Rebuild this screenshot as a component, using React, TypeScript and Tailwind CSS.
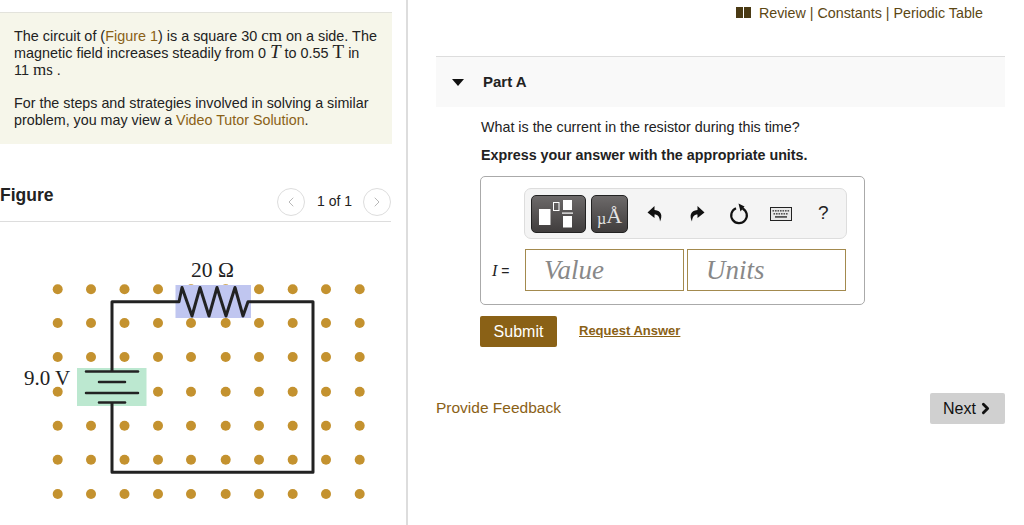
import React from 'react';
import { ChevronLeft, ChevronRight } from 'lucide-react';

const dotXs = [57.7, 91, 124.5, 158, 191, 225.7, 259, 292.7, 326, 359.7];
const dotYs = [49.3, 83, 117, 151.7, 185.7, 219.7, 254];

const Circuit = () => (
  <svg width="406" height="285" viewBox="0 0 406 285" className="block">
    {dotYs.map(y =>
      dotXs.map(x => <circle key={`${x}-${y}`} cx={x} cy={y} r="5" fill="#c4922f" />)
    )}
    <rect x="175.5" y="45" width="75.5" height="33" fill="#c0c6f0" />
    <rect x="77" y="128" width="69.5" height="38" fill="#bce8d0" />
    <path
      d="M112 131V61.7H179L182 47.5L192 76L200 47.5L209 76L217 47.5L226 76L235 47.5L243 76L248 61.7H313V232.3H112V162"
      fill="none"
      stroke="#222"
      strokeWidth="3"
      strokeLinejoin="round"
    />
    <g stroke="#222" strokeLinecap="round">
      <path d="M86 131.5H138" strokeWidth="2.5" />
      <path d="M99 142H125" strokeWidth="2.5" />
      <path d="M86 153H138" strokeWidth="2.5" />
      <path d="M99 162.5H125" strokeWidth="2.5" />
    </g>
    <text x="191" y="37" fontFamily="'Liberation Serif', serif" fontSize="21.5" fill="#222">
      20 Ω
    </text>
    <text x="24" y="145" fontFamily="'Liberation Serif', serif" fontSize="21" fill="#222">
      9.0 V
    </text>
  </svg>
);

const TemplatesIcon = () => (
  <svg width="34" height="28" viewBox="0 0 34 28" fill="#fff">
    <rect x="0" y="9" width="11.5" height="16" />
    <rect x="14.5" y="2.5" width="5.5" height="8" fill="none" stroke="#fff" strokeWidth="1" />
    <rect x="24" y="0" width="9" height="10" />
    <rect x="23" y="12.5" width="11" height="1.2" />
    <rect x="24" y="16" width="9" height="11.5" />
  </svg>
);

const Undo = ({ flip }: { flip?: boolean }) => (
  <svg width="16" height="18" viewBox="0 0 16 18" className={flip ? '-scale-x-100' : ''}>
    <path d="M7.5 1L0.5 7.5L7.5 13V9.5C11 9.5 12.6 11.8 13 16.5C15.6 11 14.8 5.5 7.5 5Z" fill="#111" />
  </svg>
);

const Reset = () => (
  <svg width="20" height="22" viewBox="0 0 20 22" fill="none">
    <path d="M7 5.2A7.8 7.8 0 1 0 13.5 5.4" stroke="#111" strokeWidth="2.2" />
    <path d="M9.5 0.5L15.5 3.5L11.5 8.5Z" fill="#111" />
  </svg>
);

const Keyboard = () => (
  <svg width="22" height="14" viewBox="0 0 22 14">
    <rect x="0.5" y="0.5" width="21" height="13" fill="#e8e8e8" stroke="#222" />
    <g fill="#555">
      {[2.5, 5, 7.5, 10, 12.5, 15, 17.5].map(x => (
        <rect key={x} x={x} y="3" width="1.6" height="1.6" />
      ))}
      {[3.5, 6, 8.5, 11, 13.5, 16].map(x => (
        <rect key={x} x={x} y="6" width="1.6" height="1.6" />
      ))}
      <rect x="5" y="9" width="12" height="1.8" />
    </g>
  </svg>
);

export default function App() {
  return (
    <div className="flex h-[525px] w-[1024px] overflow-hidden bg-white font-['Liberation_Sans',sans-serif] text-[#222]">
      {/* Left column */}
      <div className="w-[408px] shrink-0 border-r-2 border-[#ddd] pt-3 pr-[14px]">
        <div className="h-[132px] border-t border-[#e3e3dc] bg-[#f6f6ea] pt-[15px] pl-[14px] leading-[17px]">
          <p className="text-[14.4px]">
            The circuit of (<span className="text-[#8a6116]">Figure 1</span>) is a square 30{' '}
            <span className="font-['Liberation_Serif',serif] text-[17px] leading-[0]">cm</span> on a side. The
            <br />
            magnetic field increases steadily from 0{' '}
            <span className="font-['Liberation_Serif',serif] text-[19px] leading-[0] italic">T</span> to 0.55{' '}
            <span className="font-['Liberation_Serif',serif] text-[19px] leading-[0]">T</span> in
            <br />
            11 <span className="font-['Liberation_Serif',serif] text-[17px] leading-[0]">ms</span> .
          </p>
          <p className="mt-[15.5px] text-[14.3px]">
            For the steps and strategies involved in solving a similar
            <br />
            problem, you may view a <span className="text-[#8a6116]">Video Tutor Solution</span>.
          </p>
        </div>

        <div className="mt-[41px] mr-[1px] flex h-[37px] items-center justify-between border-b border-[#ddd] pb-[3px]">
          <h2 className="mb-[12px] text-[17.5px] font-bold">Figure</h2>
          <div className="flex items-center gap-[11px] text-[14px]">
            <span className="mr-[1px] flex h-[28px] w-[28px] items-center justify-center rounded-full border border-[#ddd] text-[#aaa]">
              <ChevronLeft size={16} strokeWidth={1.25} />
            </span>
            <span>1 of 1</span>
            <span className="flex h-[28px] w-[28px] items-center justify-center rounded-full border border-[#ddd] text-[#aaa]">
              <ChevronRight size={16} strokeWidth={1.25} />
            </span>
          </div>
        </div>

        <div className="mt-[18px]">
          <Circuit />
        </div>
      </div>

      {/* Right column */}
      <div className="flex-1 pr-[19px] pl-[28px] text-[14.3px]">
        <div className="flex h-[57px] items-start justify-end border-b border-[#ddd] pt-[3px] pr-[22px] text-[#5c4714]">
          <svg width="15" height="11" viewBox="0 0 15 11" className="mt-[4px] mr-[8px]" fill="#4a3a14">
            <rect x="0" y="0" width="7" height="11" />
            <rect x="8" y="0" width="7" height="11" />
          </svg>
          <span>Review | Constants | Periodic Table</span>
        </div>

        <div className="flex h-[50px] items-center bg-[#f9f9f9] pl-[16px]">
          <span className="h-0 w-0 border-x-[6px] border-t-[7px] border-x-transparent border-t-[#111]" />
          <span className="ml-[19px] text-[15px] font-bold">Part A</span>
        </div>

        <div className="pl-[44px]">
          <p className="mt-[11px] ml-[1px] leading-[18px]">What is the current in the resistor during this time?</p>
          <p className="mt-[10px] ml-[1px] leading-[18px] font-bold">Express your answer with the appropriate units.</p>

          <div className="mt-[12px] h-[129px] w-[385px] rounded-[5px] border border-[#aaa] pt-[11px] pl-[43px]">
            <div className="flex h-[51px] w-[323px] items-center rounded-[7px] border border-[#ddd] bg-[#f4f4f4] pl-[6px]">
              <button className="flex h-[38px] w-[55px] items-center justify-start rounded-[5px] border border-[#222] bg-gradient-to-b from-[#6d6a6a] to-[#403d3d] pl-[7px]">
                <TemplatesIcon />
              </button>
              <button className="ml-[5px] flex h-[38px] w-[37px] items-end justify-center rounded-[5px] border border-[#222] bg-gradient-to-b from-[#6d6a6a] to-[#403d3d] pb-[5px] font-['Liberation_Serif',serif] leading-none text-[#e4e4e4]">
                <span className="text-[16px]">µ</span>
                <span className="text-[22px]">Å</span>
              </button>
              <span className="ml-[19px] flex w-[16px] justify-center"><Undo /></span>
              <span className="ml-[26px] flex w-[16px] justify-center"><Undo flip /></span>
              <span className="ml-[24px] flex w-[20px] justify-center"><Reset /></span>
              <span className="ml-[21px] flex w-[22px] justify-center"><Keyboard /></span>
              <span className="ml-[26px] text-[19px]">?</span>
            </div>

            <div className="relative mt-[10px] ml-[1px] flex gap-[3px]">
              <span className="absolute top-[10px] -left-[33px] text-[14px] whitespace-nowrap">
                <i className="font-['Liberation_Serif',serif] text-[16px]">I</i> =
              </span>
              <div className="flex h-[42px] w-[159px] items-center border border-[#a38a4e] pl-[18px] font-['Liberation_Serif',serif] text-[27px] text-[#888] italic">
                Value
              </div>
              <div className="flex h-[42px] w-[159px] items-center border border-[#a38a4e] pl-[18px] font-['Liberation_Serif',serif] text-[27px] text-[#888] italic">
                Units
              </div>
            </div>
          </div>

          <div className="mt-[11px] flex items-center">
            <button className="h-[31px] w-[77px] rounded-[2px] bg-[#8a6116] text-[16px] text-white">Submit</button>
            <a className="mb-[1px] ml-[22px] text-[13px] font-bold text-[#8a6116] underline">Request Answer</a>
          </div>
        </div>

        <div className="mt-[46px] flex items-center justify-between">
          <a className="mb-[2px] text-[15.5px] text-[#8a6116]">Provide Feedback</a>
          <button className="flex h-[31px] w-[75px] items-center justify-center gap-[1px] rounded-[2px] bg-[#d0d0d0] pl-[2px] text-[16px] text-[#111]">
            Next
            <ChevronRight size={17} strokeWidth={4} />
          </button>
        </div>
      </div>
    </div>
  );
}
